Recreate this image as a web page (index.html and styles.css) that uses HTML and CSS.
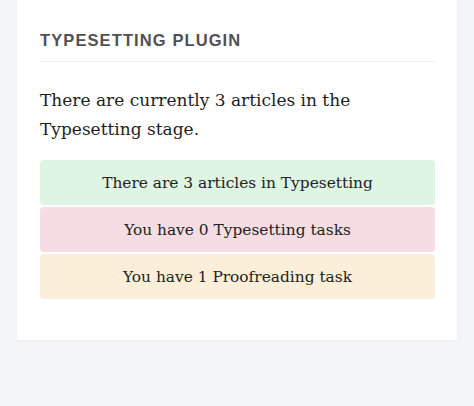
FILE: index.html
```html
<!DOCTYPE html>
<html>
<head>
<meta charset="utf-8">
<link rel="stylesheet" href="styles.css">
</head>
<body>
<div class="page">
  <section class="card">
    <h2 class="title">TYPESETTING PLUGIN</h2>
    <p class="lead">There are currently 3 articles in the Typesetting stage.</p>
    <div class="notices">
      <div class="notice green">There are 3 articles in Typesetting</div>
      <div class="notice pink">You have 0 Typesetting tasks</div>
      <div class="notice yellow">You have 1 Proofreading task</div>
    </div>
  </section>
</div>
</body>
</html>
```

FILE: styles.css
```css
html, body {
  margin: 0;
  padding: 0;
  background: #f4f5f9;
}
.page {
  width: 474px;
  height: 406px;
  padding-left: 17px;
  box-sizing: border-box;
}
.card {
  width: 440px;
  box-sizing: border-box;
  background: #ffffff;
  padding: 30px 22px 41px 23px;
  box-shadow: 0 1px 3px rgba(0,0,0,0.04);
}
.title {
  margin: 0;
  font-family: "Liberation Sans", Arial, sans-serif;
  font-weight: bold;
  font-size: 16.5px;
  letter-spacing: 1.1px;
  color: #505154;
  line-height: 20px;
  padding-bottom: 11px;
  border-bottom: 1px solid #f1f1f3;
}
.lead {
  margin: 24px 0 16px 0;
  font-family: "DejaVu Serif", serif;
  font-size: 17px;
  line-height: 29px;
  color: #1e1e1e;
}
.notices {
  display: flex;
  flex-direction: column;
  gap: 2px;
}
.notice {
  height: 45px;
  display: flex;
  align-items: center;
  justify-content: center;
  border-radius: 4px;
  font-family: "DejaVu Serif", serif;
  font-size: 15.4px;
  color: #222222;
}
.green { background: #def5e3; }
.pink { background: #f6dde4; }
.yellow { background: #fcefd9; }
```
